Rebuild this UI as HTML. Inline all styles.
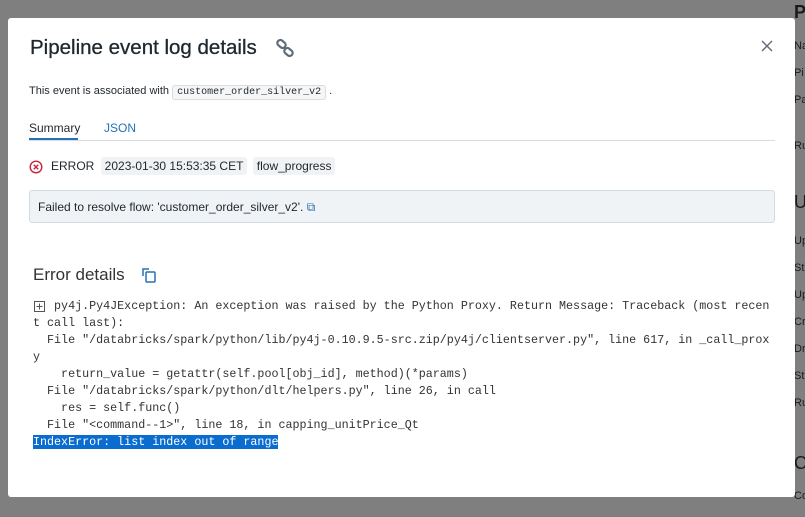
<!DOCTYPE html>
<html><head><style>
*{margin:0;padding:0;box-sizing:border-box}
body{width:805px;height:517px;background:#7f7f7f;position:relative;overflow:hidden;font-family:"Liberation Sans",sans-serif;color:#1f272d}
.bg{position:absolute;color:#1a1a1a;font-size:11px}
.modal{position:absolute;left:8px;top:18px;width:787px;height:479px;background:#fff;border-radius:3px}
.a{position:absolute}
.code{font-family:"Liberation Mono",monospace;font-size:10px;background:#f5f6f7;border:1px solid #d8dde1;border-radius:3px;padding:1px 4px}
.tag{background:#f0f2f4;border-radius:3px;padding:2px 4px;font-size:12px}
pre{font-family:"Liberation Mono","DejaVu Sans Mono",monospace;font-size:11.7px;line-height:17px;color:#333}
</style></head><body>
<div class="bg" style="left:794px;top:2px;font-size:18px;font-weight:bold">Pi</div>
<div class="bg" style="left:794px;top:40px">Na</div>
<div class="bg" style="left:794px;top:67px">Pi</div>
<div class="bg" style="left:794px;top:94px">Pa</div>
<div class="bg" style="left:794px;top:140px">Ru</div>
<div class="bg" style="left:794px;top:192px;font-size:18px">U</div>
<div class="bg" style="left:794px;top:235px">Up</div>
<div class="bg" style="left:794px;top:262px">St</div>
<div class="bg" style="left:794px;top:289px">Up</div>
<div class="bg" style="left:794px;top:316px">Cr</div>
<div class="bg" style="left:794px;top:343px">Dr</div>
<div class="bg" style="left:794px;top:370px">St</div>
<div class="bg" style="left:794px;top:397px">Ru</div>
<div class="bg" style="left:794px;top:453px;font-size:18px">C</div>
<div class="bg" style="left:794px;top:490px">Co</div>
<div class="modal">
<div class="a" style="left:22px;top:18px;font-size:20.5px;color:#1f272d;-webkit-text-stroke:0.3px #1f272d">Pipeline event log details</div>
<svg class="a" style="left:267px;top:20px" width="20" height="20" viewBox="0 0 20 20" fill="none" stroke="#5f6b75" stroke-width="2.2"><rect x="2" y="3" width="9" height="6" rx="3" transform="rotate(40 6.5 6)"/><rect x="9" y="11" width="9" height="6" rx="3" transform="rotate(40 13.5 14)"/></svg>
<svg class="a" style="left:753px;top:22px" width="12" height="12" viewBox="0 0 12 12" stroke="#5f6b75" stroke-width="1.4"><path d="M1 1L11 11M11 1L1 11"/></svg>
<div class="a" style="left:21px;top:67px;font-size:11px">This event is associated with <span class="code">customer_order_silver_v2</span> .</div>
<div class="a" style="left:21px;top:103px;font-size:12px">Summary</div>
<div class="a" style="left:96px;top:103px;font-size:12px;color:#2272b4">JSON</div>
<div class="a" style="left:21px;top:120px;width:49px;height:3px;background:#2272b4"></div>
<div class="a" style="left:21px;top:122px;width:746px;height:1px;background:#d8dde1"></div>
<svg class="a" style="left:21px;top:142px" width="14" height="14" viewBox="0 0 14 14" fill="none" stroke="#c8243b" stroke-width="1.4"><circle cx="7" cy="7" r="5.8"/><path d="M4.8 4.8L9.2 9.2M9.2 4.8L4.8 9.2"/></svg>
<div class="a" style="left:43px;top:141px;font-size:12px">ERROR <span class="tag" style="margin-left:3px">2023-01-30 15:53:35 CET</span> <span class="tag" style="margin-left:2px">flow_progress</span></div>
<div class="a" style="left:21px;top:172px;width:746px;height:33px;background:#f0f3f6;border:1px solid #d3dbe2;border-radius:3px;font-size:12px;padding:9px 8px">Failed to resolve flow: 'customer_order_silver_v2'. <span style="color:#2272b4">⧉</span></div>
<div class="a" style="left:25px;top:247px;font-size:17px;color:#333">Error details</div>
<svg class="a" style="left:132px;top:248px" width="18" height="18" viewBox="0 0 18 18" fill="none" stroke="#2272b4" stroke-width="1.5"><path d="M3 10V3h6"/><rect x="6" y="6" width="9" height="10" rx="1"/></svg>
<svg class="a" style="left:26px;top:283px" width="11" height="11" viewBox="0 0 11 11" fill="none" stroke="#555"><rect x=".5" y=".5" width="10" height="10"/><path d="M5.5 2.5v6M2.5 5.5h6"/></svg>
<pre class="a" style="left:25px;top:280px">   py4j.Py4JException: An exception was raised by the Python Proxy. Return Message: Traceback (most recen
t call last):
  File "/databricks/spark/python/lib/py4j-0.10.9.5-src.zip/py4j/clientserver.py", line 617, in _call_prox
y
    return_value = getattr(self.pool[obj_id], method)(*params)
  File "/databricks/spark/python/dlt/helpers.py", line 26, in call
    res = self.func()
  File "&lt;command--1&gt;", line 18, in capping_unitPrice_Qt
<span style="background:#0b6ccf;color:#fff">IndexError: list index out of range</span></pre>
</div>
</body></html>
